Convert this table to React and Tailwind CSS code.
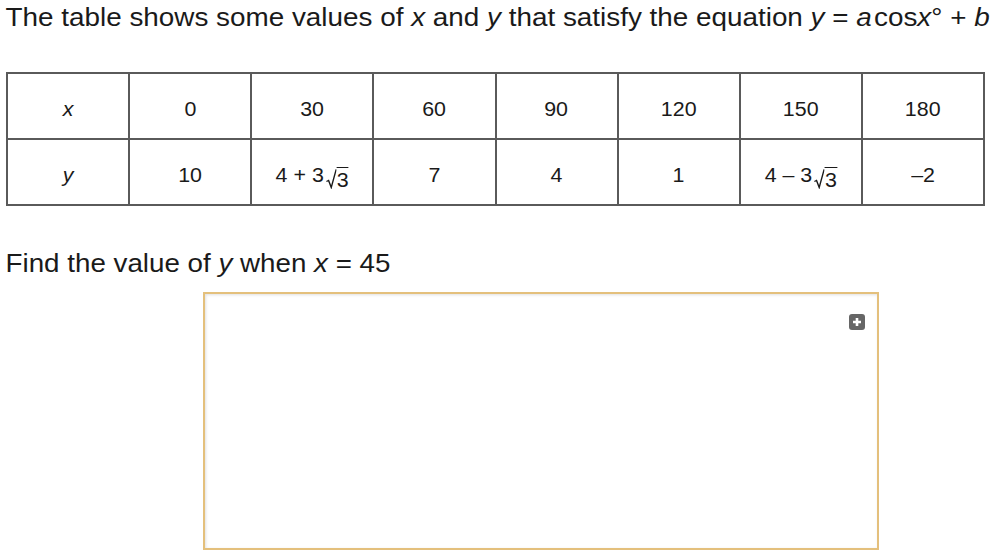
const X_VALUES = ['0', '30', '60', '90', '120', '150', '180']

function Sqrt3() {
  return (
    <span className="inline-flex items-end">
      <svg width="10" height="20" viewBox="0 0 10 20" className="mb-[1px]">
        <path d="M0.5 12.5L2.5 11.5L5 18.5L9.5 0.8H10" stroke="#1a1a1a" strokeWidth="1.3" fill="none" />
      </svg>
      <span className="border-t-[1.3px] border-[#1a1a1a] pt-[2px] leading-none">3</span>
    </span>
  )
}

const Y_VALUES = [
  '10',
  <span key="a" className="inline-flex items-end">4 + 3<span className="w-[2px]" /><Sqrt3 /></span>,
  '7',
  '4',
  '1',
  <span key="b" className="inline-flex items-end">4 – 3<span className="w-[2px]" /><Sqrt3 /></span>,
  '–2',
]

function Cell({ children, italic }) {
  return (
    <td className="border-2 border-[#5a5a5a] pt-[5px] text-center">
      <span className={`inline-block scale-x-[1.07] ${italic ? 'italic' : ''}`}>{children}</span>
    </td>
  )
}

export default function App() {
  return (
    <div className="h-[554px] w-[996px] overflow-hidden bg-white font-['Liberation_Sans',Arial,sans-serif] text-[#1a1a1a]">
      <p className="origin-left scale-x-[1.114] whitespace-nowrap pl-[5px] pt-[2px] text-[25px] leading-[30px]">
        The table shows some values of <i>x</i> and <i>y</i> that satisfy the equation{' '}
        <i>y</i> = <i>a</i><span className="ml-[2px]">cos</span><i>x</i>° + <i>b</i>
      </p>

      <table className="ml-[6px] mt-[40px] w-[979px] table-fixed border-collapse text-[20px]">
        <tbody>
          <tr className="h-[66px]">
            <Cell italic>x</Cell>
            {X_VALUES.map((v) => (
              <Cell key={v}>{v}</Cell>
            ))}
          </tr>
          <tr className="h-[66px]">
            <Cell italic>y</Cell>
            {Y_VALUES.map((v, i) => (
              <Cell key={i}>{v}</Cell>
            ))}
          </tr>
        </tbody>
      </table>

      <p className="origin-left scale-x-[1.11] whitespace-nowrap pl-[5px] pt-[42px] text-[25px] leading-[30px]">
        Find the value of <i>y</i> when <i>x</i> = 45
      </p>

      <div className="ml-[203px] mt-[14px] flex h-[258px] w-[676px] justify-end border-2 border-[#e4c07c] p-[20px] pr-[12px] shadow-[inset_1px_1px_3px_rgba(0,0,0,0.12)]">
        <div className="flex h-[16px] w-[16px] items-center justify-center rounded-[3px] bg-[#666]">
          <svg width="12" height="12" viewBox="0 0 12 12">
            <path d="M6 2v8M2 6h8" stroke="white" strokeWidth="2.6" />
          </svg>
        </div>
      </div>
    </div>
  )
}
